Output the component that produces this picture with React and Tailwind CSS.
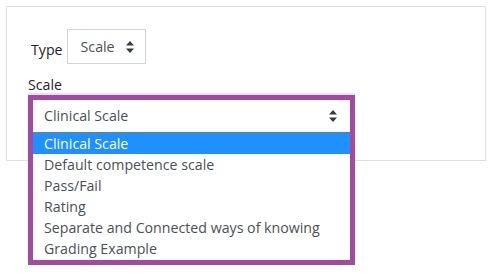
import React from 'react';

const SortIcon = ({ className }) => (
  <svg viewBox="0 0 8 12" className={className} fill="currentColor">
    <path d="M4 0 L8 4.5 L0 4.5 Z" />
    <path d="M4 12 L8 7.5 L0 7.5 Z" />
  </svg>
);

const options = [
  'Clinical Scale',
  'Default competence scale',
  'Pass/Fail',
  'Rating',
  'Separate and Connected ways of knowing',
  'Grading Example',
];

const App = () => {
  return (
    <div className="w-[492px] h-[275px] bg-white p-[6px] text-[14.2px] text-[#1d2125]" style={{ fontFamily: '"Open Sans", "Noto Sans", sans-serif' }}>
      <div className="h-[155px] border border-[#dfdfdf] pl-[21px] pt-[22px]">
        <div className="flex items-center">
          <span className="ml-[3px] mr-[4px] mt-[6px]">Type</span>
          <div className="flex items-center h-[35px] w-[79px] border border-[#ced4da] pl-[13px] text-[#495057]">
            <span>Scale</span>
            <SortIcon className="w-[8px] h-[12px] ml-[11px] text-[#343a40]" />
          </div>
        </div>
        <div className="mt-[10px] leading-[21px]">Scale</div>
        <div className="relative h-[37px]">
          <div className="absolute left-0 top-0 w-[327px] border-[5px] border-[#a349a4] bg-white shadow-[0_-2px_0_#dbe7f3]">
            <div className="flex items-center justify-between h-[32px] pl-[11px] pr-[13px] text-[#495057]">
              <span>Clinical Scale</span>
              <SortIcon className="w-[8px] h-[12px] text-[#343a40]" />
            </div>
            <div className="border-t border-[#7a7a7a]">
              {options.map((o, i) => (
                <div
                  key={o}
                  className={`h-[21px] leading-[22px] pl-[11px] ${i === 0 ? 'bg-[#1e90ff] text-white' : 'text-[#495057]'} ${i === options.length - 1 ? 'h-[22px]' : ''}`}
                >
                  {o}
                </div>
              ))}
            </div>
          </div>
        </div>
      </div>
    </div>
  );
};

export default App;
